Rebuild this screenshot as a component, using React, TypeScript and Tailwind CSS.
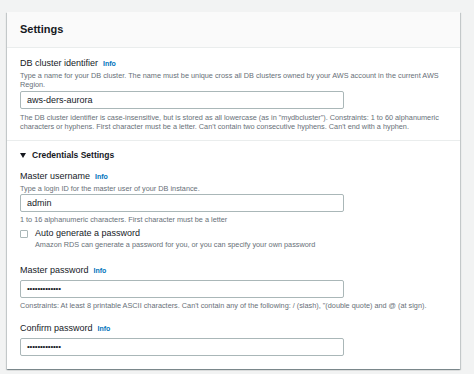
const font = { fontFamily: '"Liberation Sans", Arial, sans-serif' };

function Info() {
  return <span className="ml-[5px] text-[7px] font-bold text-[#0073bb]">Info</span>;
}

function Label({ children, className = '' }: { children: React.ReactNode; className?: string }) {
  return (
    <div className={`text-[9px] leading-[12px] text-[#16191f] ${className}`}>
      {children}
      <Info />
    </div>
  );
}

function Hint({ children, className = '' }: { children: React.ReactNode; className?: string }) {
  return <div className={`text-[7.3px] leading-[9px] text-[#687078] whitespace-nowrap ${className}`}>{children}</div>;
}

function Field({ value, password = false, className = '' }: { value: string; password?: boolean; className?: string }) {
  return (
    <div
      className={`flex h-[18px] w-[324px] items-center rounded-[2px] border border-[#aab7b8] bg-white px-[6px] ${className}`}
    >
      {password ? (
        <span className="text-[8px] leading-none tracking-[-0.2px] text-[#16191f]">{value}</span>
      ) : (
        <span className="text-[9px] leading-none text-[#16191f]">{value}</span>
      )}
    </div>
  );
}

export default function App() {
  const dots = '•••••••••••••';
  return (
    <div className="min-h-[374px] w-[474px] bg-[#f2f3f3] pt-[12px]" style={font}>
      <div className="ml-[7px] w-[453px] bg-white shadow-[0_1px_1px_0_rgba(0,28,36,0.3),1px_1px_1px_0_rgba(0,28,36,0.15),-1px_1px_1px_0_rgba(0,28,36,0.15)]">
        <div className="flex h-[36px] items-center border-b border-[#eaeded] bg-[#fafafa] pl-[13px]">
          <h2 className="text-[11px] font-bold text-[#16191f]">Settings</h2>
        </div>

        <div className="border-b border-[#eaeded] pl-[13px] pt-[9px] pb-[9px]">
          <Label>DB cluster identifier</Label>
          <Hint className="mt-[1px]">
            Type a name for your DB cluster. The name must be unique cross all DB clusters owned by your AWS account in the current AWS
            <br />
            Region.
          </Hint>
          <Field value="aws-ders-aurora" className="mt-[2px]" />
          <Hint className="mt-[4px]">
            The DB cluster identifier is case-insensitive, but is stored as all lowercase (as in "mydbcluster"). Constraints: 1 to 60 alphanumeric
            <br />
            characters or hyphens. First character must be a letter. Can't contain two consecutive hyphens. Can't end with a hyphen.
          </Hint>
        </div>

        <div className="pl-[13px] pt-[8px] pb-[13px]">
          <div className="flex h-[12px] items-center gap-[6px]">
            <svg width="6" height="5" viewBox="0 0 6 5">
              <polygon points="0,0 6,0 3,5" fill="#16191f" />
            </svg>
            <span className="text-[8.5px] font-bold text-[#16191f]">Credentials Settings</span>
          </div>

          <Label className="mt-[9px]">Master username</Label>
          <Hint className="mt-[1px]">Type a login ID for the master user of your DB instance.</Hint>
          <Field value="admin" className="mt-[1px]" />
          <Hint className="mt-[3px]">1 to 16 alphanumeric characters. First character must be a letter</Hint>

          <div className="mt-[4px] flex h-[12px] items-center">
            <div className="h-[8px] w-[8px] rounded-[1px] border border-[#aab7b8] bg-white" />
            <span className="ml-[7px] text-[9px] text-[#16191f]">Auto generate a password</span>
          </div>
          <Hint className="pl-[15px]">Amazon RDS can generate a password for you, or you can specify your own password</Hint>

          <Label className="mt-[15px]">Master password</Label>
          <Field value={dots} password className="mt-[3px]" />
          <Hint className="mt-[3px]">
            Constraints: At least 8 printable ASCII characters. Can't contain any of the following: / (slash), "(double quote) and @ (at sign).
          </Hint>

          <Label className="mt-[12px]">Confirm password</Label>
          <Field value={dots} password className="mt-[3px]" />
        </div>
      </div>
    </div>
  );
}
